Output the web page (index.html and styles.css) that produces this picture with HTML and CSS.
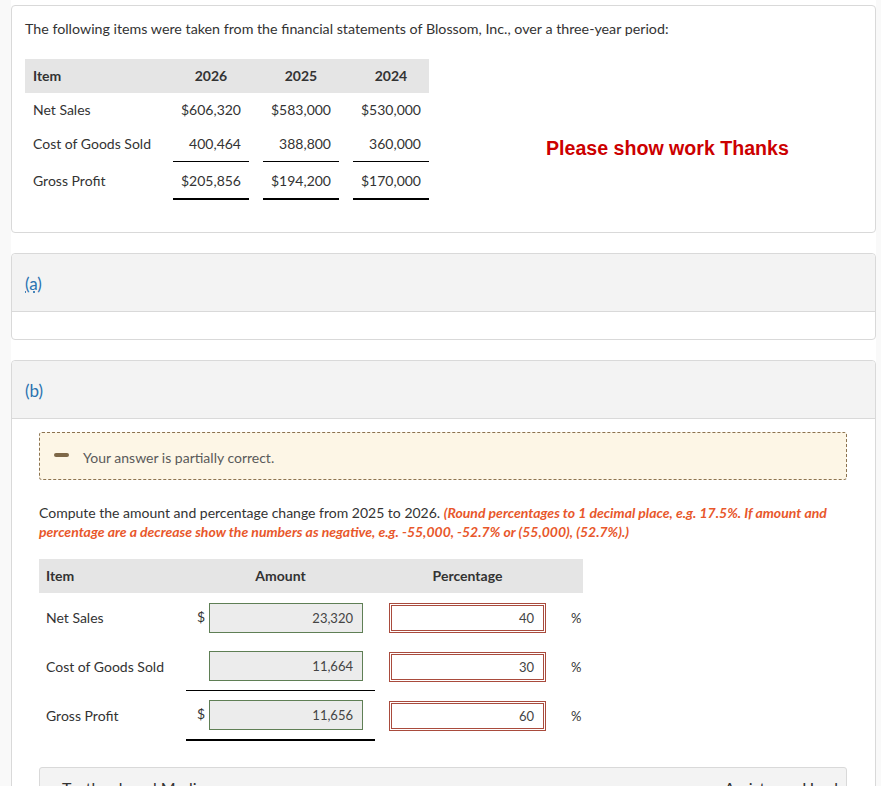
FILE: index.html
```html
<!DOCTYPE html>
<html>
<head>
<meta charset="utf-8">
<link rel="stylesheet" href="styles.css">
</head>
<body>
<div class="page">
  <div class="card intro">
    <p class="lead">The following items were taken from the financial statements of Blossom, Inc., over a three-year period:</p>
    <div class="intro-row">
      <div class="ftable">
        <div class="fhead first">Item</div>
        <div class="fhead"><span>2026</span></div>
        <div class="fhead"><span>2025</span></div>
        <div class="fhead"><span>2024</span></div>

        <div class="fcell first">Net Sales</div>
        <div class="fcell"><span>$606,320</span></div>
        <div class="fcell"><span>$583,000</span></div>
        <div class="fcell"><span>$530,000</span></div>

        <div class="fcell first">Cost of Goods Sold</div>
        <div class="fcell"><span class="single">400,464</span></div>
        <div class="fcell"><span class="single">388,800</span></div>
        <div class="fcell"><span class="single">360,000</span></div>

        <div class="fcell first gp">Gross Profit</div>
        <div class="fcell"><span class="double">$205,856</span></div>
        <div class="fcell"><span class="double">$194,200</span></div>
        <div class="fcell"><span class="double">$170,000</span></div>
      </div>
      <div class="note">Please show work Thanks</div>
    </div>
  </div>

  <div class="card part">
    <div class="part-head"><span class="part-label link">(a)</span></div>
    <div class="part-body-empty"></div>
  </div>

  <div class="card part last">
    <div class="part-head"><span class="part-label">(b)</span></div>
    <div class="part-body">
      <div class="banner">
        <span class="minus"></span>
        <span class="banner-text">Your answer is partially correct.</span>
      </div>
      <p class="instr">Compute the amount and percentage change from 2025 to 2026. <em>(Round percentages to 1 decimal place, e.g. 17.5%. If amount and percentage are a decrease show the numbers as negative, e.g. -55,000, -52.7% or (55,000), (52.7%).)</em></p>

      <div class="atable">
        <div class="ahead item">Item</div>
        <div class="ahead center">Amount</div>
        <div class="ahead"></div>
        <div class="ahead center">Percentage</div>
        <div class="ahead"></div>

        <div class="arow item">Net Sales</div>
        <div class="arow amt"><span class="cur">$</span><span class="inp green">23,320</span></div>
        <div class="arow"></div>
        <div class="arow"><span class="inp red">40</span></div>
        <div class="arow unit">%</div>

        <div class="arow item">Cost of Goods Sold</div>
        <div class="arow amt single"><span class="cur"></span><span class="inp green">11,664</span></div>
        <div class="arow"></div>
        <div class="arow"><span class="inp red">30</span></div>
        <div class="arow unit">%</div>

        <div class="arow item">Gross Profit</div>
        <div class="arow amt double"><span class="cur">$</span><span class="inp green">11,656</span></div>
        <div class="arow"></div>
        <div class="arow"><span class="inp red">60</span></div>
        <div class="arow unit">%</div>
      </div>

      <div class="media">
        <span>Textbook and Media</span>
        <span>Assistance Used</span>
      </div>
    </div>
  </div>
</div>
</body>
</html>
```

FILE: styles.css
```css
* { box-sizing: border-box; }

html, body {
  margin: 0;
  padding: 0;
}

body {
  background: #f9f9f9;
  font-family: Lato, "Open Sans", sans-serif;
  font-size: 14px;
  color: #333;
}

.page {
  margin: 0 5px 0 11px;
  padding-top: 5px;
  background: #fff;
  min-height: 900px;
}

.card {
  border: 1px solid #d9d9d9;
  border-radius: 4px;
  background: #fff;
}

.intro {
  padding: 13px 13px 37px;
}

.lead {
  margin: 0;
  line-height: 20px;
  font-size: 14.25px;
}

.intro-row {
  display: flex;
  margin-top: 20px;
}

.ftable {
  display: grid;
  grid-template-columns: 134px 90px 90px 90px;
  width: 404px;
}

.fhead {
  background: #e5e5e5;
  height: 34px;
  line-height: 34px;
  font-weight: bold;
  padding-left: 14px;
}

.fhead span {
  display: block;
  text-align: center;
}

.fhead.first, .fcell.first {
  padding-left: 8px;
}

.fcell {
  padding-left: 14px;
  line-height: 34px;
  height: 34px;
}

.fcell.gp {
  padding-top: 3px;
}

.fcell span {
  display: block;
  text-align: right;
  padding-right: 8px;
  height: 34px;
}

.fcell span.single {
  border-bottom: 1px solid #000;
  height: 35px;
}

.fcell span.double {
  border-bottom: 2px solid #000;
  height: 39px;
  padding-top: 3px;
}

.note {
  margin-left: 117px;
  margin-top: 78px;
  font-family: "Liberation Sans", Arial, sans-serif;
  font-weight: bold;
  font-size: 19.6px;
  line-height: 22px;
  color: #cc0000;
  white-space: nowrap;
}

.part {
  margin-top: 20px;
}

.part-head {
  background: #f3f3f3;
  border-bottom: 1px solid #d9d9d9;
  height: 58px;
  padding-left: 13px;
  display: flex;
  align-items: center;
  border-radius: 4px 4px 0 0;
}

.part-label {
  font-size: 17px;
  color: #2a72b0;
  padding-top: 2px;
}

.part-label.link {
  text-decoration: underline dotted #2a72b0;
  text-underline-offset: 2px;
}

.part-body-empty {
  height: 27px;
}

.part.last {
  min-height: 460px;
}

.part-body {
  padding: 13px 28px 0 27px;
}

.banner {
  height: 48px;
  border: 1px dashed #8c7350;
  border-radius: 3px;
  background: #fdf6e6;
  display: flex;
  align-items: center;
  padding-left: 14px;
}

.minus {
  width: 15px;
  height: 4px;
  border-radius: 2px;
  background: #7e6848;
  margin-right: 14px;
  margin-top: -3px;
}

.banner-text {
  color: #5a5a5a;
  font-size: 14px;
  padding-top: 3px;
}

.instr {
  margin: 23px 0 0;
  line-height: 19px;
  font-size: 14px;
}

.instr em {
  font-style: italic;
  font-weight: bold;
  color: #e8572b;
}

.atable {
  margin-top: 18px;
  display: grid;
  grid-template-columns: 147px 189px 14px 157px 37px;
  width: 544px;
}

.ahead {
  background: #e5e5e5;
  height: 34px;
  line-height: 34px;
  font-weight: bold;
}

.ahead.item {
  padding-left: 7px;
}

.ahead.center {
  text-align: center;
}

.arow {
  height: 49px;
  display: flex;
  align-items: center;
}

.arow.item {
  padding-left: 7px;
}

.arow.amt {
  padding-left: 11px;
}

.arow.single {
  border-bottom: 1px solid #000;
}

.arow.double {
  border-bottom: 2px solid #000;
  height: 50px;
}

.cur {
  width: 12px;
  margin-top: -3px;
}

.inp {
  display: block;
  height: 30px;
  line-height: 28px;
  text-align: right;
  font-size: 13px;
  color: #444;
}

.inp.green {
  width: 154px;
  border: 1px solid #5f7f55;
  background: #ececec;
  padding-right: 9px;
}

.inp.red {
  width: 157px;
  border: 3px double #a94b3d;
  background: #fff;
  line-height: 24px;
  padding-right: 9px;
}

.arow.unit {
  padding-left: 25px;
  font-size: 13px;
}

.media {
  margin-top: 26px;
  background: #f3f3f3;
  border: 1px solid #d9d9d9;
  border-radius: 3px;
  height: 60px;
  display: flex;
  justify-content: space-between;
  padding: 10px 8px 0 22px;
  font-size: 16px;
  color: #333;
}
```
